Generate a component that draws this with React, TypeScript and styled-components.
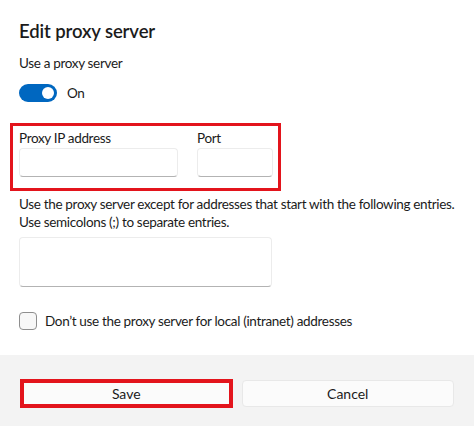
import styled, { createGlobalStyle } from "styled-components";

const GlobalStyle = createGlobalStyle`
  html, body {
    margin: 0;
    padding: 0;
    background: #ffffff;
  }
  body {
    font-family: Lato, "Noto Sans", sans-serif;
    font-size: 13.5px;
    letter-spacing: -0.33px;
    color: #1b1b1b;
  }
`;

const Page = styled.div`
  display: flex;
  flex-direction: column;
  min-height: 100vh;
  width: 474px;
  box-sizing: border-box;
`;

const Content = styled.div`
  display: flex;
  flex-direction: column;
  align-items: flex-start;
  padding: 0 19px;
`;

const Title = styled.h1`
  margin: 18px 0 0;
  font-size: 18.5px;
  line-height: 26px;
  font-weight: 600;
  letter-spacing: -0.1px;
`;

const Text = styled.div<{ $mt?: number }>`
  margin-top: ${(p) => p.$mt ?? 0}px;
  line-height: 20px;
`;

const Paragraph = styled.p`
  margin: 4px 0 0;
  line-height: 18px;
  white-space: nowrap;
`;

const ToggleRow = styled.div`
  display: flex;
  align-items: center;
  gap: 10px;
  margin-top: 11px;
  height: 18px;
`;

const Track = styled.span<{ $on: boolean }>`
  position: relative;
  display: inline-block;
  width: 38px;
  height: 18px;
  border-radius: 9px;
  background: ${(p) => (p.$on ? "#0067c0" : "#ffffff")};

  &::after {
    content: "";
    position: absolute;
    top: 3px;
    left: ${(p) => (p.$on ? "23px" : "3px")};
    width: 12px;
    height: 12px;
    border-radius: 50%;
    background: #ffffff;
  }
`;

const Highlight = styled.div`
  display: flex;
  gap: 19px;
  margin: 21px 0 0 -9px;
  padding: 2px 5px 11px 6px;
  border: 3px solid #e3141c;
`;

const Field = styled.div`
  display: flex;
  flex-direction: column;
`;

const FieldLabel = styled.label`
  line-height: 20px;
`;

const Input = styled.div<{ $w: number; $h: number }>`
  width: ${(p) => p.$w}px;
  height: ${(p) => p.$h}px;
  box-sizing: border-box;
  background: #ffffff;
  border: 1px solid #ececec;
  border-bottom-color: #b3b3b3;
  border-radius: 4px;
`;

const InputSlot = styled.div`
  margin-top: 6px;
`;

const CheckRow = styled.label`
  display: flex;
  align-items: center;
  gap: 8px;
  margin-top: 24px;
  line-height: 20px;
`;

const Box = styled.span`
  width: 18px;
  height: 18px;
  box-sizing: border-box;
  border: 1px solid #8e8e8e;
  border-radius: 4px;
  background: #f7f7f7;
`;

const Footer = styled.div`
  margin-top: auto;
  display: grid;
  grid-template-columns: 1fr 1fr;
  gap: 9px;
  height: 71px;
  box-sizing: border-box;
  padding: 24px 20px 0;
  background: #f3f3f3;
`;

const Button = styled.button<{ $marked?: boolean }>`
  height: ${(p) => (p.$marked ? 29 : 27)}px;
  margin-top: ${(p) => (p.$marked ? 0 : 1)}px;
  box-sizing: border-box;
  font-family: inherit;
  font-size: 14px;
  color: #1b1b1b;
  background: #fbfbfb;
  border: ${(p) => (p.$marked ? "4px solid #e3141c" : "1px solid #e8e8e8")};
  border-radius: ${(p) => (p.$marked ? 0 : 4)}px;
`;

export default function App() {
  return (
    <Page>
      <GlobalStyle />
      <Content>
        <Title>Edit proxy server</Title>
        <Text $mt={9}>Use a proxy server</Text>
        <ToggleRow>
          <Track $on />
          <span>On</span>
        </ToggleRow>
        <Highlight>
          <Field>
            <FieldLabel>Proxy IP address</FieldLabel>
            <Input $w={159} $h={29} />
          </Field>
          <Field>
            <FieldLabel>Port</FieldLabel>
            <Input $w={76} $h={29} />
          </Field>
        </Highlight>
        <Paragraph>
          Use the proxy server except for addresses that start with the following entries.
          <br />
          Use semicolons (;) to separate entries.
        </Paragraph>
        <InputSlot>
          <Input $w={253} $h={50} />
        </InputSlot>
        <CheckRow>
          <Box />
          Don’t use the proxy server for local (intranet) addresses
        </CheckRow>
      </Content>
      <Footer>
        <Button $marked>Save</Button>
        <Button>Cancel</Button>
      </Footer>
    </Page>
  );
}
